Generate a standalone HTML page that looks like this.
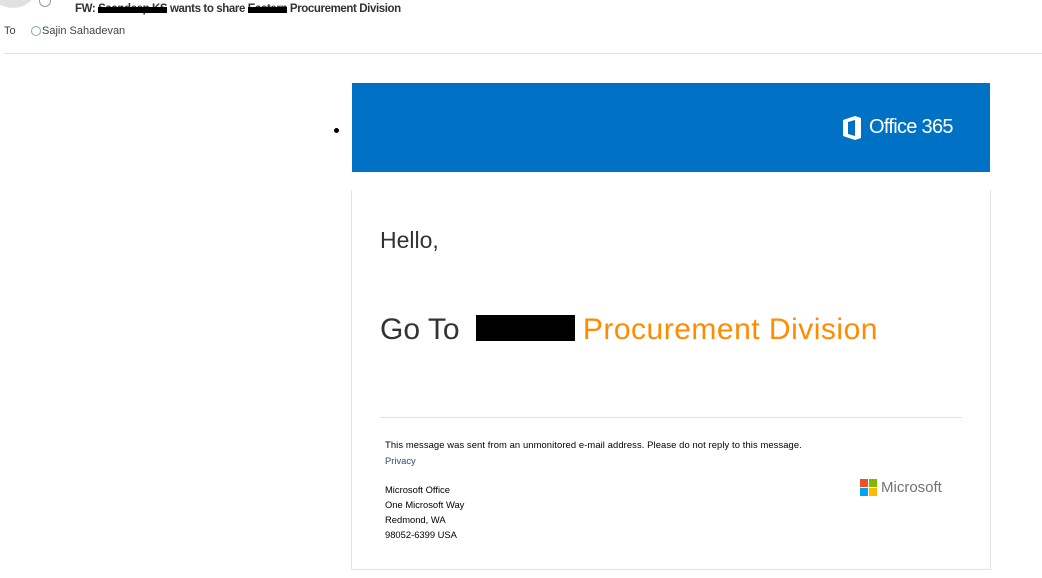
<!DOCTYPE html>
<html><head><meta charset="utf-8"><style>
body{margin:0;width:1042px;height:578px;background:#fff;font-family:"Liberation Sans",sans-serif;position:relative;overflow:hidden}
.a{position:absolute}
.r{position:relative;display:inline-block}
.r:after{content:"";position:absolute;left:0;right:0;top:4px;height:6px;background:#000}
</style></head><body>
<div class="a" style="left:-10px;top:-30px;width:46px;height:38px;border-radius:50%;background:#e1e1e1"></div>
<div class="a" style="left:39px;top:-5px;width:10px;height:10px;border-radius:50%;border:1px solid #9a9a9a;background:#fff"></div>
<div class="a" style="left:75px;top:3px;font-size:11.5px;color:#333;white-space:nowrap;font-weight:bold;letter-spacing:-0.4px">FW: <span class="r">Saandeep KS</span> wants to share <span class="r">Eastern</span> Procurement Division</div>
<div class="a" style="left:4px;top:25px;font-size:11px;color:#444">To</div>
<div class="a" style="left:31px;top:26px;width:8px;height:8px;border-radius:50%;border:1px solid #8ab"></div>
<div class="a" style="left:42px;top:25px;font-size:11px;color:#444">Sajin Sahadevan</div>
<div class="a" style="left:4px;top:53px;width:1038px;height:1px;background:#e1e1e1"></div>
<div class="a" style="left:334px;top:128px;width:5px;height:5px;border-radius:50%;background:#000"></div>
<div class="a" style="left:352px;top:83px;width:638px;height:89px;background:#0072c6"></div>
<svg class="a" style="left:842px;top:116px" width="20" height="24" viewBox="0 0 20 24"><path d="M1 4 L13 0 L19 2 L19 22 L13 24 L1 20 Z M6 6 L13 4 L13 20 L6 18 Z" fill="#fff" fill-rule="evenodd"/></svg>
<div class="a" style="left:869px;top:116px;font-size:20px;color:#fff;letter-spacing:-0.7px">Office 365</div>
<div class="a" style="left:351px;top:190px;width:638px;height:379px;border:1px solid #e3e3e3;border-top:none"></div>
<div class="a" style="left:380px;top:227px;font-size:23px;color:#333">Hello,</div>
<div class="a" style="left:380px;top:313px;font-size:30px;color:#333;white-space:nowrap">Go To <span style="display:inline-block;width:99px;height:26px;background:#000;vertical-align:-2px;margin:0 8px 0 8px"></span><span style="color:#ff8c00;letter-spacing:0.5px">Procurement Division</span></div>
<div class="a" style="left:380px;top:417px;width:582px;height:1px;background:#e3e3e3"></div>
<div class="a" style="left:385px;top:439px;font-size:9.4px;color:#000;letter-spacing:0.1px">This message was sent from an unmonitored e-mail address. Please do not reply to this message.</div>
<div class="a" style="left:385px;top:455px;font-size:9.4px;color:#2b4c7e">Privacy</div>
<div class="a" style="left:385px;top:482px;font-size:9.4px;color:#000;line-height:15px">Microsoft Office<br>One Microsoft Way<br>Redmond, WA<br>98052-6399 USA</div>
<div class="a" style="left:860px;top:479px;width:8px;height:8px;background:#f25022"></div>
<div class="a" style="left:869px;top:479px;width:8px;height:8px;background:#7fba00"></div>
<div class="a" style="left:860px;top:488px;width:8px;height:8px;background:#00a4ef"></div>
<div class="a" style="left:869px;top:488px;width:8px;height:8px;background:#ffb900"></div>
<div class="a" style="left:881px;top:479px;font-size:15px;color:#737373">Microsoft</div>
</body></html>
